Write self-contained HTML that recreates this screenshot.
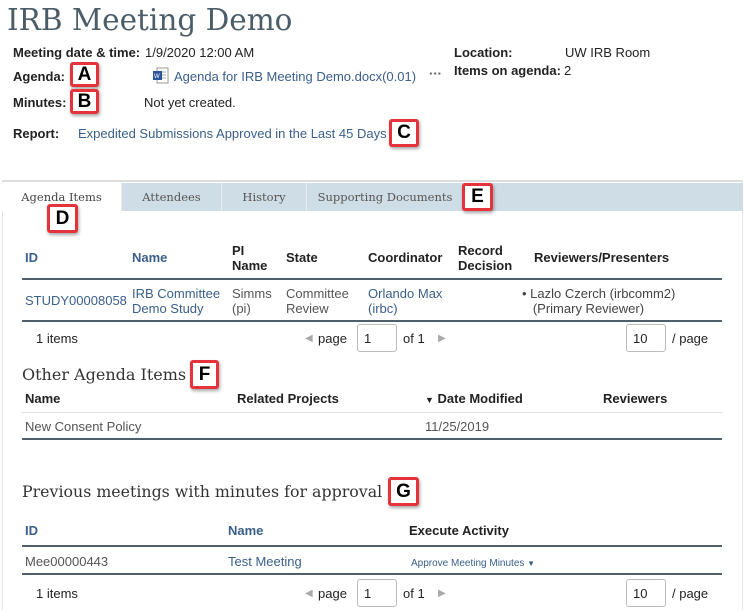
<!DOCTYPE html>
<html><head><meta charset="utf-8"><style>
*{margin:0;padding:0;box-sizing:border-box}
body{width:750px;height:610px;background:#fff;position:relative;overflow:hidden;font-family:"Liberation Sans",Arial,sans-serif;font-size:13px;color:#222}
.a{position:absolute;white-space:nowrap;line-height:15px}
.b{font-weight:bold}
.l{color:#3a5f8a}
.box{position:absolute;border:3px solid #e5333b;border-radius:3px;background:#fff;font:bold 19px "Liberation Sans",sans-serif;color:#000;text-align:center;box-shadow:1px 2px 3px rgba(0,0,0,.35)}
.serif{font-family:"DejaVu Serif","Liberation Serif",serif}
.hl{position:absolute;left:22px;width:700px}
.inp{position:absolute;border:1px solid #bbb;border-radius:3px;height:28px;width:40px;padding:6px 6px;font-size:13px;background:#fff}
.tab{position:absolute;top:183px;height:28px;font:11.5px "DejaVu Serif",serif;color:#555;padding-top:7px;text-align:center;border-right:1px solid #e8eef2}
</style></head><body>
<div class="a serif" style="left:7px;top:2px;font-size:29.5px;line-height:36px;color:#4c5d6a">IRB Meeting Demo</div>
<div class="a b" style="left:13px;top:45px">Meeting date &amp; time:</div>
<div class="a" style="left:145px;top:45px">1/9/2020 12:00 AM</div>
<div class="a b" style="left:454px;top:45px">Location:</div>
<div class="a" style="left:565px;top:45px">UW IRB Room</div>
<div class="a b" style="left:454px;top:63px">Items on agenda:</div>
<div class="a" style="left:564px;top:63px">2</div>
<div class="a b" style="left:13px;top:69px">Agenda:</div>
<div class="box" style="left:70px;top:62px;width:29px;height:25px;line-height:19px">A</div>
<svg style="position:absolute;left:152px;top:67px" width="18" height="18"><rect x="5" y="1" width="11" height="15" fill="#fff" stroke="#999"/><line x1="8" y1="5" x2="14" y2="5" stroke="#aaa"/><line x1="8" y1="8" x2="14" y2="8" stroke="#aaa"/><line x1="8" y1="11" x2="14" y2="11" stroke="#aaa"/><rect x="1" y="4" width="9" height="9" fill="#2b579a"/><text x="2" y="11" font-size="6" fill="#fff" font-family="Liberation Sans">W</text></svg>
<div class="a l" style="left:174px;top:69px">Agenda for IRB Meeting Demo.docx(0.01)</div>
<div class="a b" style="left:429px;top:66px;color:#555">···</div>
<div class="a b" style="left:13px;top:95px">Minutes:</div>
<div class="box" style="left:70px;top:89px;width:29px;height:25px;line-height:19px">B</div>
<div class="a" style="left:144px;top:95px">Not yet created.</div>
<div class="a b" style="left:13px;top:126px">Report:</div>
<div class="a l" style="left:78px;top:126px">Expedited Submissions Approved in the Last 45 Days</div>
<div class="box" style="left:389px;top:119px;width:30px;height:28px;line-height:22px">C</div>

<div style="position:absolute;left:2px;top:180px;width:741px;height:430px;border-top:2px solid #ddd;border-left:1px solid #e4e4e4;border-right:1px solid #e4e4e4"></div>
<div style="position:absolute;left:2px;top:183px;width:741px;height:28px;background:#cfdde6"></div>
<div class="tab" style="left:2px;width:120px;background:#fff;color:#444">Agenda Items</div>
<div class="tab" style="left:122px;width:100px">Attendees</div>
<div class="tab" style="left:222px;width:85px">History</div>
<div class="tab" style="left:307px;width:156px;border:none">Supporting Documents</div>
<div class="box" style="left:462px;top:183px;width:31px;height:28px;line-height:22px">E</div>
<div class="box" style="left:47px;top:204px;width:31px;height:29px;line-height:23px">D</div>

<div class="a b l" style="left:25px;top:250px">ID</div>
<div class="a b l" style="left:132px;top:250px">Name</div>
<div class="a b" style="left:232px;top:243px">PI<br>Name</div>
<div class="a b" style="left:286px;top:250px">State</div>
<div class="a b" style="left:368px;top:250px">Coordinator</div>
<div class="a b" style="left:458px;top:243px">Record<br>Decision</div>
<div class="a b" style="left:534px;top:250px">Reviewers/Presenters</div>
<div class="hl" style="top:278px;border-top:2px solid #4f5f6c"></div>
<div class="a l" style="left:25px;top:293px">STUDY00008058</div>
<div class="a l" style="left:132px;top:286px">IRB Committee<br>Demo Study</div>
<div class="a l" style="left:232px;top:286px;color:#555">Simms<br>(pi)</div>
<div class="a" style="left:286px;top:286px;color:#555">Committee<br>Review</div>
<div class="a l" style="left:368px;top:286px">Orlando Max<br>(irbc)</div>
<div class="a" style="left:522px;top:286px;color:#444">• Lazlo Czerch (irbcomm2)<br>&nbsp;&nbsp; (Primary Reviewer)</div>
<div class="hl" style="top:320px;border-top:2px solid #4f5f6c"></div>
<div class="a" style="left:36px;top:331px">1 items</div>
<div class="a" style="left:305px;top:331px;color:#aaa;font-size:10px">◀</div>
<div class="a" style="left:318px;top:331px">page</div>
<div class="inp" style="left:357px;top:324px">1</div>
<div class="a" style="left:403px;top:331px">of 1</div>
<div class="a" style="left:438px;top:331px;color:#aaa;font-size:10px">▶</div>
<div class="inp" style="left:626px;top:324px">10</div>
<div class="a" style="left:672px;top:331px">/ page</div>

<div class="a serif" style="left:22px;top:365px;font-size:16px;line-height:20px;color:#333">Other Agenda Items</div>
<div class="box" style="left:190px;top:360px;width:29px;height:29px;line-height:23px">F</div>
<div class="a b" style="left:25px;top:391px">Name</div>
<div class="a b" style="left:237px;top:391px">Related Projects</div>
<div class="a b" style="left:425px;top:391px"><span style="font-size:9px">▼</span> Date Modified</div>
<div class="a b" style="left:603px;top:391px">Reviewers</div>
<div class="hl" style="top:412px;border-top:1px solid #ddd"></div>
<div class="a" style="left:25px;top:419px;color:#555">New Consent Policy</div>
<div class="a" style="left:425px;top:419px;color:#555">11/25/2019</div>
<div class="hl" style="top:438px;border-top:2px solid #4f5f6c"></div>

<div class="a serif" style="left:22px;top:482px;font-size:15.8px;line-height:20px;color:#333">Previous meetings with minutes for approval</div>
<div class="box" style="left:388px;top:477px;width:31px;height:29px;line-height:23px">G</div>
<div class="a b l" style="left:25px;top:523px">ID</div>
<div class="a b l" style="left:228px;top:523px">Name</div>
<div class="a b" style="left:409px;top:523px">Execute Activity</div>
<div class="hl" style="top:545px;border-top:2px solid #4f5f6c"></div>
<div class="a" style="left:25px;top:554px;color:#555">Mee00000443</div>
<div class="a l" style="left:228px;top:554px">Test Meeting</div>
<div class="a l" style="left:411px;top:556px;font-size:10px">Approve Meeting Minutes <span style="font-size:8px">▼</span></div>
<div class="hl" style="top:573px;border-top:2px solid #4f5f6c"></div>
<div class="a" style="left:36px;top:586px">1 items</div>
<div class="a" style="left:305px;top:586px;color:#aaa;font-size:10px">◀</div>
<div class="a" style="left:318px;top:586px">page</div>
<div class="inp" style="left:357px;top:579px">1</div>
<div class="a" style="left:403px;top:586px">of 1</div>
<div class="a" style="left:438px;top:586px;color:#aaa;font-size:10px">▶</div>
<div class="inp" style="left:626px;top:579px">10</div>
<div class="a" style="left:672px;top:586px">/ page</div>
</body></html>
